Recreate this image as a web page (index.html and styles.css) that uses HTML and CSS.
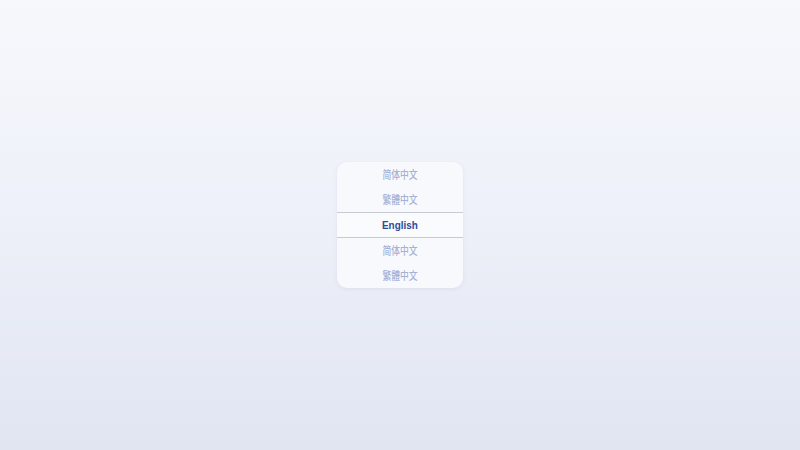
FILE: index.html
```html
<!DOCTYPE html>
<html lang="zh">
<head>
    <meta charset="UTF-8">
    <meta name="viewport" content="width=device-width, initial-scale=1.0">
    <title>Language Picker</title>
    <link rel="stylesheet" href="styles.css">
</head>
<body>

    <div class="picker">
        <div class="picker-item"><span class="label">简体中文</span></div>
        <div class="picker-item"><span class="label">繁體中文</span></div>
        <div class="picker-item selected"><span class="label">English</span></div>
        <div class="picker-item"><span class="label">简体中文</span></div>
        <div class="picker-item"><span class="label">繁體中文</span></div>
    </div>

</body>
</html>
```

FILE: styles.css
```css
html, body {
    height: 100%;
}

body {
    margin: 0;
    background: linear-gradient(to bottom, #f7f8fc 0%, #eef1f9 45%, #e1e5f2 100%);
    font-family: 'Liberation Sans', Arial, 'Noto Sans CJK SC', sans-serif;
    display: flex;
    align-items: center;
    justify-content: center;
}

.picker {
    width: 126px;
    background: #f8f9fc;
    border-radius: 10px;
    box-shadow: 0 1px 4px rgba(120, 130, 170, 0.12);
    display: flex;
    flex-direction: column;
}

.picker-item {
    height: 24px;
    padding-bottom: 1px;
    display: flex;
    align-items: center;
    justify-content: center;
    font-size: 11px;
    font-weight: 500;
    color: #a6b1d6;
}

/* the wheel font is a bit narrower than the regular one */
.label {
    display: inline-block;
    transform: scaleX(0.8);
}

.picker-item.selected {
    height: 24px;
    padding-bottom: 0;
    background: #fafbfd;
    border-top: 1px solid #c7cad5;
    border-bottom: 1px solid #c7cad5;
    font-size: 11px;
    font-weight: bold;
    color: #2f4a94;
}

.picker-item.selected .label {
    transform: scaleX(0.9);
}
```
